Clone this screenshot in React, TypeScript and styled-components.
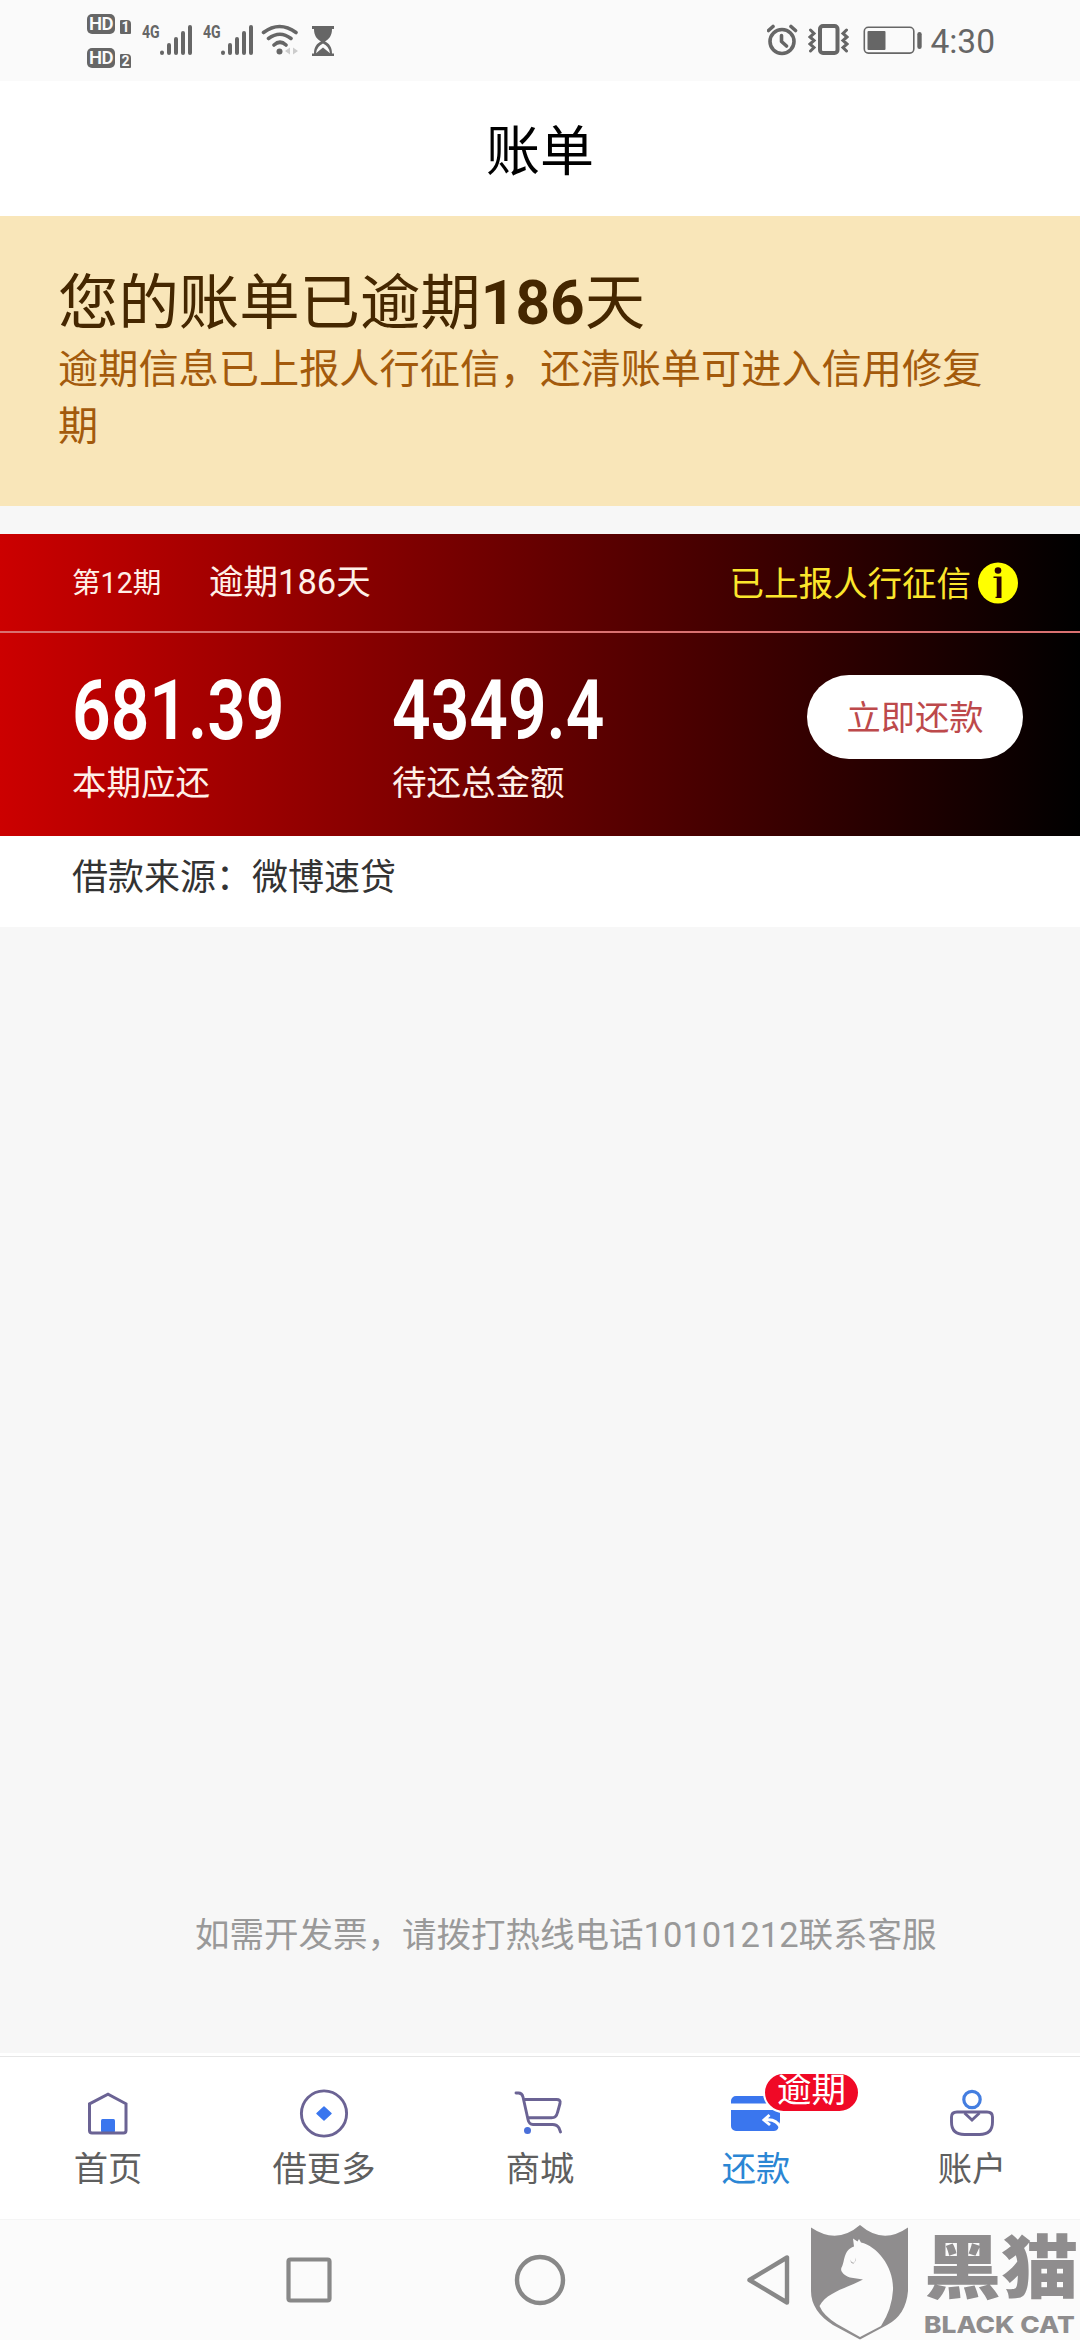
import React from "react";
import styled, { createGlobalStyle } from "styled-components";

const FONT = `Roboto, "Noto Sans CJK SC", sans-serif`;
const GREY = "#666666";
const VIOLET = "#6b6394";
const BLUE = "#3a76ee";
const MARK = "#8f8d8e";

const GlobalStyle = createGlobalStyle`
  *, *::before, *::after { box-sizing: border-box; }
  body { margin: 0; background: #f7f7f7; font-family: ${FONT}; }
`;

const Screen = styled.div`
  display: flex;
  flex-direction: column;
  width: 1080px;
  height: 2340px;
  overflow: hidden;
  background: #f7f7f7;
`;

const StatusBar = styled.header`
  display: flex;
  align-items: flex-start;
  justify-content: space-between;
  height: 81px;
  padding: 0 85px 0 87px;
  background: #fafafa;
`;

const StatusGroup = styled.div`
  display: flex;
  align-items: flex-start;
`;

const StatusIcon = styled.svg<{ $top: number; $left?: number }>`
  display: block;
  flex: none;
  margin-top: ${(p) => p.$top}px;
  margin-left: ${(p) => p.$left ?? 0}px;
`;

const HdColumn = styled.div`
  display: flex;
  flex-direction: column;
  gap: 14px;
  padding-top: 14px;
`;

const HdRow = styled.div`
  display: flex;
  align-items: flex-end;
  gap: 5px;
  height: 20px;
`;

const HdBadge = styled.span`
  width: 28px;
  height: 20px;
  border-radius: 5px;
  background: ${GREY};
  color: #fafafa;
  font-size: 18.5px;
  font-weight: 600;
  line-height: 20px;
  text-align: center;
  letter-spacing: -0.5px;
`;

const SimTag = styled.span`
  width: 11px;
  height: 14px;
  border-radius: 1px 4px 1px 1px;
  background: ${GREY};
  color: #fafafa;
  font-size: 14px;
  font-weight: 700;
  line-height: 15px;
  text-align: center;
`;

const NetLabel = styled.span<{ $left: number }>`
  width: 17px;
  margin: 25px 0 0 ${(p) => p.$left}px;
  color: ${GREY};
  font-size: 19px;
  font-weight: 700;
  line-height: 14px;
  transform: scaleX(0.74);
  transform-origin: left;
`;

const Clock = styled.time`
  margin: 22px 0 0 7px;
  color: ${GREY};
  font-size: 33.5px;
  line-height: 40px;
`;

const TitleBar = styled.div`
  height: 135px;
  padding-top: 4px;
  background: #ffffff;
  color: #000000;
  font-size: 54px;
  line-height: 135px;
  text-align: center;
`;

const Notice = styled.section`
  height: 290px;
  padding: 51px 58px 0;
  background: #f9e6b9;
`;

const NoticeTitle = styled.h1`
  margin: 0;
  color: #452700;
  font-size: 60.4px;
  font-weight: 400;
  line-height: 74px;
`;

const NoticeText = styled.p`
  margin: 0;
  color: #a35a0c;
  font-size: 40.2px;
  line-height: 57px;
`;

const Card = styled.section`
  height: 302px;
  margin-top: 28px;
  background: linear-gradient(90deg, #cc0000 0%, #000000 100%);
  color: #fff0e8;
`;

const CardHead = styled.div`
  display: flex;
  align-items: center;
  height: 99px;
  padding: 0 62px 0 72px;
  border-bottom: 2px solid #d97070;
`;

const Period = styled.span`
  width: 137px;
  padding-top: 1px;
  font-size: 28.6px;
  line-height: 40px;
`;

const OverdueDays = styled.span`
  flex: 1;
  margin-top: -2px;
  font-size: 34.5px;
  line-height: 44px;
`;

const Reported = styled.span`
  margin-right: 7px;
  color: #fbe62c;
  font-size: 34.5px;
  line-height: 44px;
  padding-top: 3px;
`;

const CardBody = styled.div`
  display: flex;
  padding: 36px 57px 0 72px;
`;

const Figure = styled.div<{ $width: number }>`
  width: ${(p) => p.$width}px;
`;

const Amount = styled.div`
  width: max-content;
  color: #ffffff;
  font-size: 82.5px;
  font-weight: 600;
  line-height: 84px;
  height: 82px;
  transform: scaleX(0.82);
  transform-origin: left;
`;

const FigureLabel = styled.div`
  margin-top: 10px;
  font-size: 34.5px;
  line-height: 44px;
`;

const PayButton = styled.button`
  width: 216px;
  height: 84px;
  margin: 6px 0 0 auto;
  padding: 0 0 4px;
  border: 0;
  border-radius: 42px;
  background: #ffffff;
  color: #bd494b;
  font-family: inherit;
  font-size: 34.3px;
`;

const Source = styled.div`
  height: 91px;
  padding-left: 72px;
  background: #ffffff;
  color: #333333;
  font-size: 36px;
  line-height: 85px;
`;

const Content = styled.main`
  display: flex;
  flex: 1;
  flex-direction: column;
  justify-content: flex-end;
`;

const Hotline = styled.p`
  margin: 0 0 96px 195px;
  color: #999999;
  font-size: 34.5px;
  line-height: 44px;
`;

const TabBar = styled.nav`
  display: grid;
  grid-template-columns: repeat(5, 1fr);
  height: 166px;
  border-top: 3px solid #ffffff;
  background: #ffffff;
  box-shadow: inset 0 1px 0 #e6e6e6;
`;

const Tab = styled.a<{ $active?: boolean }>`
  position: relative;
  display: flex;
  flex-direction: column;
  align-items: center;
  padding-top: 29px;
  color: ${(p) => (p.$active ? "#2b86d4" : "#5f5f5f")};
  font-size: 34.3px;
  line-height: 44px;
  text-decoration: none;
`;

const TabIcon = styled.svg`
  display: block;
  width: 56px;
  height: 56px;
  margin-bottom: 6px;
`;

const Badge = styled.span`
  position: absolute;
  top: 16px;
  left: 115px;
  width: 97px;
  height: 41px;
  border: 2px solid #ffffff;
  border-radius: 21px;
  background: #f00926;
  color: #ffffff;
  font-size: 34.5px;
  line-height: 33px;
  text-align: center;
  overflow: hidden;
`;

const SystemNav = styled.footer`
  display: flex;
  align-items: flex-start;
  height: 121px;
  background: #fbfbfb;
  box-shadow: inset 0 1px 0 #f5f5f5;
`;

const NavIcon = styled.svg<{ $left: number }>`
  display: block;
  flex: none;
  width: 54px;
  height: 54px;
  margin: 34px 0 0 ${(p) => p.$left}px;
`;

const Shield = styled.svg`
  display: block;
  flex: none;
  width: 98px;
  height: 115px;
  margin: 6px 0 0 15px;
`;

const Brand = styled.div`
  display: flex;
  flex-direction: column;
  flex: none;
  width: 156px;
  margin: 17px 0 0 15px;
  color: ${MARK};
`;

const BrandName = styled.span`
  width: max-content;
  font-family: ${FONT};
  font-size: 69px;
  font-weight: 900;
  line-height: 68px;
  transform: scaleX(1.12);
  transform-origin: left;
`;

const BrandLatin = styled.span`
  width: max-content;
  margin-top: 8px;
  font-family: Inter, "Liberation Sans", sans-serif;
  font-size: 23px;
  font-weight: 800;
  line-height: 26px;
  transform: scaleX(1.145);
  transform-origin: left;
`;

const SignalIcon = () => (
  <StatusIcon $top={24} width="34" height="32" viewBox="158 24 34 32" fill="none" stroke={GREY} strokeWidth="4" strokeLinecap="round">
    <path d="M161 52.5v.5M168 45v8M175 39v14M182 33v20M189 27v26" />
  </StatusIcon>
);

const WifiIcon = () => (
  <StatusIcon $top={23} $left={7} width="38" height="34" viewBox="261 23 38 34" fill="none" stroke={GREY} strokeWidth="3.6" strokeLinecap="round">
    <path d="M263.500 32.500Q279.500 20.500 296 32.500M268.500 38.500Q280 30 291 38.500M274 45Q280 39.500 286 45" />
    <circle cx="279.500" cy="51.500" r="3" fill={GREY} stroke="none" />
    <path d="M290 47.500v7l-5-3.500zM293 47.500v7l5-3.500z" fill="#cccccc" stroke="none" />
  </StatusIcon>
);

const HourglassIcon = () => (
  <StatusIcon $top={25} $left={12} width="24" height="32" viewBox="311 25 24 32">
    <path d="M312 26h22v3h-2c0 7-3 10-7 12.500 4 2 7 5 7 12h2v2.500h-22V53.500h2c0-7 3-10 7-12-4-2.500-7-5.500-7-12.500h-2z" fill={GREY} />
    <path d="M316 53.300q.8-7 7-9.800 6.200 2.800 7 9.800l-7-5.800z" fill="#fafafa" />
  </StatusIcon>
);

const AlarmIcon = () => (
  <StatusIcon $top={23} width="31" height="33" viewBox="766 23 31 33" fill="none" stroke={GREY} strokeWidth="3.6" strokeLinecap="round">
    <circle cx="781" cy="41.500" r="12" />
    <path d="M780.500 35.500v6l5 4.500M767.500 30.500l4.500-4M794.500 30.500l-4.500-4" strokeLinejoin="round" />
  </StatusIcon>
);

const VibrateIcon = () => (
  <StatusIcon $top={23} $left={10} width="42" height="34" viewBox="807 23 42 34" fill="none" stroke={GREY}>
    <rect x="819" y="26" width="17.500" height="27" rx="3" strokeWidth="4" />
    <path d="M809.500 30l3.500 3.500-4 3.500 4 3.500-4 3.500 4 3.500-3.500 3.500M845.500 30l-3.500 3.500 4 3.500-4 3.500 4 3.500-4 3.500 3.500 3.500" strokeWidth="3" strokeLinecap="round" />
  </StatusIcon>
);

const BatteryIcon = () => (
  <StatusIcon $top={26} $left={13} width="60" height="30" viewBox="861.500 26 60 30" fill="none">
    <rect x="862.800" y="27.300" width="49.500" height="25.800" rx="4" stroke={GREY} strokeWidth="1.600" />
    <rect x="866" y="31" width="18" height="19" rx="1" fill={GREY} />
    <rect x="915.800" y="32" width="4.400" height="17" rx="2.200" fill={GREY} />
  </StatusIcon>
);

const InfoIcon = () => (
  <svg width="40" height="42" viewBox="0 0 40 42">
    <ellipse cx="20" cy="21" rx="20" ry="20.500" fill="#ffff00" />
    <circle cx="20" cy="8.500" r="3.300" fill="#2a0000" />
    <path d="M15.500 14.500h8v21.500h-6V34.800h1.200V16h-3.200z" fill="#2a0000" />
  </svg>
);

const HomeIcon = () => (
  <TabIcon viewBox="80 2085 56 56" fill="none">
    <rect x="101" y="2119" width="14" height="13.500" rx="1.500" fill={BLUE} />
    <path d="M89.500 2103.800l18.500-9.600 18 9.600v26.700a2.500 2.500 0 0 1-2.500 2.500h-31.500a2.500 2.500 0 0 1-2.500-2.500z" stroke={VIOLET} strokeWidth="3" />
  </TabIcon>
);

const BorrowIcon = () => (
  <TabIcon viewBox="296 2085 56 56" fill="none">
    <circle cx="324" cy="2113.500" r="22.600" stroke={VIOLET} strokeWidth="2.900" />
    <path d="M324 2107l7 6.500-7 6.500-7-6.500z" fill={BLUE} stroke={BLUE} strokeWidth="1.500" strokeLinejoin="round" />
  </TabIcon>
);

const CartIcon = () => (
  <TabIcon viewBox="512 2085 56 56" fill="none" stroke={VIOLET} strokeWidth="2.900" strokeLinecap="round" strokeLinejoin="round">
    <path d="M516 2093h2.500q3.500 0 4.500 4l5 22.500q1 5 5 5h19.500q4.500 0 6.500 3.500l1.500 4" />
    <path d="M525 2099.500h31.500q4.500 0 3.500 4l-2.500 9q-1.200 5.300-6 5.300H529" />
    <circle cx="527.500" cy="2130.500" r="3.500" fill="#4a6fd9" stroke="none" />
  </TabIcon>
);

const RepayIcon = () => (
  <TabIcon viewBox="728 2085 56 56" fill="none">
    <path d="M731 2103.500v-2.500a5 5 0 0 1 5-5h44v7.500zM731 2110h49v11q-1 10-6 10H736a5 5 0 0 1-5-5z" fill={BLUE} />
    <path d="M769.500 2115l-5.500 5 6 5M765 2120q11-2 16 8" stroke="#ffffff" strokeWidth="2.900" />
  </TabIcon>
);

const AccountIcon = () => (
  <TabIcon viewBox="944 2085 56 56" fill="none" strokeWidth="2.900">
    <circle cx="972" cy="2099.500" r="8.200" stroke="#447ee0" strokeWidth="3.200" />
    <path d="M957 2112h30q5.500 0 5.500 5v5q0 12.500-13 12.500h-15q-13 0-13-12.500v-5q0-5 5.500-5z" stroke={VIOLET} />
    <path d="M964.500 2113l7.500 7 7.500-7" stroke={VIOLET} />
  </TabIcon>
);

const TABS = [
  { label: "首页", icon: <HomeIcon /> },
  { label: "借更多", icon: <BorrowIcon /> },
  { label: "商城", icon: <CartIcon /> },
  { label: "还款", icon: <RepayIcon />, active: true, badge: "逾期" },
  { label: "账户", icon: <AccountIcon /> },
];

export default function App() {
  return (
    <>
      <GlobalStyle />
      <Screen>
        <StatusBar>
          <StatusGroup>
            <HdColumn>
              <HdRow><HdBadge>HD</HdBadge><SimTag>1</SimTag></HdRow>
              <HdRow><HdBadge>HD</HdBadge><SimTag>2</SimTag></HdRow>
            </HdColumn>
            <NetLabel $left={11}>4G</NetLabel>
            <SignalIcon />
            <NetLabel $left={10}>4G</NetLabel>
            <SignalIcon />
            <WifiIcon />
            <HourglassIcon />
          </StatusGroup>
          <StatusGroup>
            <AlarmIcon />
            <VibrateIcon />
            <BatteryIcon />
            <Clock>4:30</Clock>
          </StatusGroup>
        </StatusBar>
        <TitleBar>账单</TitleBar>
        <Notice>
          <NoticeTitle>您的账单已逾期<b>186</b>天</NoticeTitle>
          <NoticeText>逾期信息已上报人行征信，还清账单可进入信用修复期</NoticeText>
        </Notice>
        <Card>
          <CardHead>
            <Period>第12期</Period>
            <OverdueDays>逾期186天</OverdueDays>
            <Reported>已上报人行征信</Reported>
            <InfoIcon />
          </CardHead>
          <CardBody>
            <Figure $width={320}>
              <Amount>681.39</Amount>
              <FigureLabel>本期应还</FigureLabel>
            </Figure>
            <Figure $width={260}>
              <Amount>4349.4</Amount>
              <FigureLabel>待还总金额</FigureLabel>
            </Figure>
            <PayButton>立即还款</PayButton>
          </CardBody>
        </Card>
        <Source>借款来源：微博速贷</Source>
        <Content>
          <Hotline>如需开发票，请拨打热线电话10101212联系客服</Hotline>
        </Content>
        <TabBar>
          {TABS.map((t) => (
            <Tab key={t.label} $active={t.active}>
              {t.icon}
              {t.label}
              {t.badge && <Badge>{t.badge}</Badge>}
            </Tab>
          ))}
        </TabBar>
        <SystemNav>
          <NavIcon $left={282} viewBox="282 2253 54 54" fill="none" stroke="#888888" strokeWidth="4.200">
            <rect x="288.500" y="2259.500" width="41" height="41" rx="2" />
          </NavIcon>
          <NavIcon $left={177} viewBox="513 2253 54 54" fill="none" stroke="#888888" strokeWidth="4.400">
            <circle cx="540" cy="2280" r="23" />
          </NavIcon>
          <NavIcon $left={175} viewBox="742 2253 54 54" fill="none" stroke="#888888" strokeWidth="4.400" strokeLinejoin="round">
            <path d="M749.500 2280l37.500-22.500v45z" />
          </NavIcon>
          <Shield viewBox="0 0 98 115">
            <path d="M0 2.500Q26 20 49 0Q72 20 97 2.500V66Q95 90 76 100L49 114.500L22 100Q0 86 0 66z" fill={MARK} />
            <path d="M42 13.500l4.500 3 1.500-2.500 2 3.500C66 21 83 42 82 65Q81 84 70 101L49 112L26 99Q12 90 8.500 81C16 67 36 63 52 54.500L39 52.500C32 50 29 46 30.500 42.500C34 37 32 25 43 21.500z" fill="#fbfbfb" />
            <path d="M39.500 34.500q1 4 4 3l1.500-5q-.5 5-2.500 6-3 0-3-4z" fill={MARK} />
          </Shield>
          <Brand>
            <BrandName>黑猫</BrandName>
            <BrandLatin>BLACK CAT</BrandLatin>
          </Brand>
        </SystemNav>
      </Screen>
    </>
  );
}
